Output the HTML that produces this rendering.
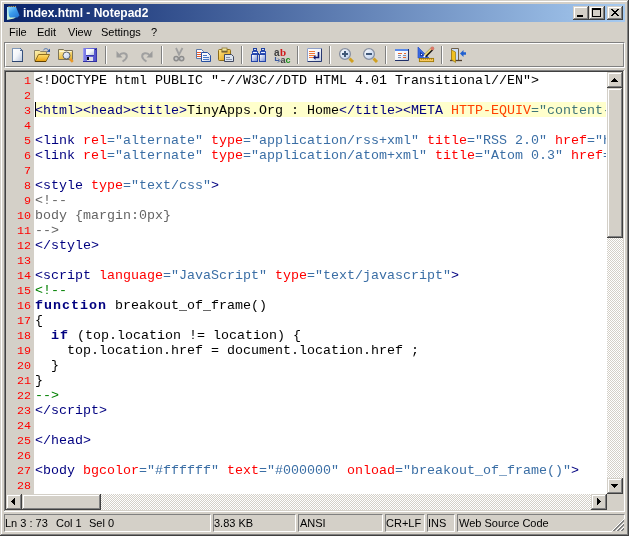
<!DOCTYPE html>
<html><head><meta charset="utf-8">
<style>
*{margin:0;padding:0;box-sizing:border-box}
html,body{width:629px;height:536px;overflow:hidden;background:#D4D0C8;position:relative}
body{font-family:"Liberation Sans",sans-serif;font-size:11px;color:#000}
.a{position:absolute}
.raised{border-style:solid;border-width:1px;border-color:#FFF #404040 #404040 #FFF}
.btn{position:absolute;width:16px;height:14px;background:#D4D0C8;box-shadow:inset -1px -1px 0 #404040,inset 1px 1px 0 #D4D0C8,inset -2px -2px 0 #808080,inset 2px 2px 0 #FFF}
.sbtn{position:absolute;width:16px;height:16px;background:#D4D0C8;box-shadow:inset -1px -1px 0 #404040,inset 1px 1px 0 #D4D0C8,inset -2px -2px 0 #808080,inset 2px 2px 0 #FFF}
.dither{background-color:#FFF;background-image:linear-gradient(45deg,#D4D0C8 25%,transparent 25%,transparent 75%,#D4D0C8 75%),linear-gradient(45deg,#D4D0C8 25%,transparent 25%,transparent 75%,#D4D0C8 75%);background-size:2px 2px;background-position:0 0,1px 1px}
.pane{position:absolute;top:514px;height:18px;border-style:solid;border-width:1px;border-color:#808080 #FFF #FFF #808080;white-space:nowrap;line-height:16px}
.st{position:absolute;top:515px;line-height:16px;white-space:nowrap}
.ed{font-family:"Liberation Mono",monospace;font-size:13.333px;white-space:pre;line-height:15px}
.ln{position:absolute;left:6px;width:25px;text-align:right;font-family:"Liberation Mono",monospace;font-size:11.667px;color:#F00;line-height:15px}
.o{color:#FF4000}.t{color:#000080}.at{color:#F00}.v{color:#3A6EA5}.v3{color:#3E7478}.c{color:#646464}.g{color:#008000}.k{color:#000080;font-weight:bold;letter-spacing:1px}
</style></head><body><div style="position:absolute;left:0;top:0;width:629px;height:536px;will-change:transform">
<!-- window frame -->
<div class="a" style="left:0;top:0;width:629px;height:536px;box-shadow:inset -1px -1px 0 #404040,inset 1px 1px 0 #D4D0C8,inset -2px -2px 0 #808080,inset 2px 2px 0 #FFF"></div>
<!-- title bar -->
<div class="a" style="left:4px;top:4px;width:621px;height:18px;background:linear-gradient(to right,#0A246A,#A6CAF0)"></div>
<svg class="a" style="left:0;top:0" width="24" height="24" viewBox="0 0 24 24">
<defs>
<linearGradient id="tiB" x1="0" y1="0" x2="1" y2="1"><stop offset="0" stop-color="#A8E8F8"/><stop offset="1" stop-color="#E8F8B8"/></linearGradient>
<linearGradient id="tiF" x1="0" y1="0" x2="0.8" y2="1"><stop offset="0" stop-color="#90D8FF"/><stop offset="0.5" stop-color="#3C9CEC"/><stop offset="1" stop-color="#2878D8"/></linearGradient>
</defs>
<path d="M7 7H15L16 17L14 18.5L7 20Z" fill="url(#tiB)"/>
<path d="M8 7H16L19.5 15.5L17.5 17.5H10L9 16Z" fill="url(#tiF)"/>
<path d="M8.5 6.5H16" stroke="#C0A050" stroke-width="1.2" stroke-dasharray="1.2 0.9"/>
</svg>
<div class="a" style="left:23px;top:4px;height:18px;line-height:18px;color:#FFF;font-weight:bold;font-size:12px;white-space:nowrap">index.html - Notepad2</div>
<div class="btn" style="left:573px;top:6px"><div class="a" style="left:4px;top:9px;width:6px;height:2px;background:#000"></div></div>
<div class="btn" style="left:589px;top:6px"><div class="a" style="left:3px;top:2px;width:9px;height:9px;border:1px solid #000;border-top-width:2px"></div></div>
<div class="btn" style="left:607px;top:6px"><svg class="a" style="left:0;top:0" width="16" height="14" shape-rendering="crispEdges"><path d="M4 3h1v1h-1zM5 3h1v1h-1zM10 3h1v1h-1zM11 3h1v1h-1zM5 4h1v1h-1zM6 4h1v1h-1zM9 4h1v1h-1zM10 4h1v1h-1zM6 5h1v1h-1zM7 5h1v1h-1zM8 5h1v1h-1zM9 5h1v1h-1zM7 6h1v1h-1zM8 6h1v1h-1zM6 7h1v1h-1zM7 7h1v1h-1zM8 7h1v1h-1zM9 7h1v1h-1zM5 8h1v1h-1zM6 8h1v1h-1zM9 8h1v1h-1zM10 8h1v1h-1zM4 9h1v1h-1zM5 9h1v1h-1zM10 9h1v1h-1zM11 9h1v1h-1z" fill="#000"/></svg></div>
<!-- menu -->
<div class="a" style="left:9px;top:23px;height:19px;line-height:19px">File</div>
<div class="a" style="left:37px;top:23px;height:19px;line-height:19px">Edit</div>
<div class="a" style="left:68px;top:23px;height:19px;line-height:19px">View</div>
<div class="a" style="left:101px;top:23px;height:19px;line-height:19px">Settings</div>
<div class="a" style="left:151px;top:23px;height:19px;line-height:19px">?</div>
<!-- toolbar etched -->
<div class="a" style="left:4px;top:42px;width:621px;height:26px;border-style:solid;border-width:1px;border-color:#808080 #FFF #FFF #808080"></div>
<div class="a" style="left:5px;top:43px;width:619px;height:24px;border-style:solid;border-width:1px;border-color:#FFF #808080 #808080 #FFF"></div>
<!-- ICONS -->
<svg class="a" style="left:0;top:0" width="629" height="70" viewBox="0 0 629 70">
<defs>
<linearGradient id="gPage" x1="0" y1="0" x2="1" y2="1"><stop offset="0" stop-color="#FFFFFF"/><stop offset="0.5" stop-color="#F4F6FA"/><stop offset="1" stop-color="#B8C6DE"/></linearGradient>
<linearGradient id="gFoldB" x1="0" y1="0" x2="1" y2="1"><stop offset="0" stop-color="#FFF4B0"/><stop offset="1" stop-color="#E0B850"/></linearGradient>
<linearGradient id="gFoldF" x1="0" y1="0" x2="0" y2="1"><stop offset="0" stop-color="#FFE070"/><stop offset="1" stop-color="#E8A010"/></linearGradient>
<linearGradient id="gSave" x1="0" y1="0" x2="1" y2="0"><stop offset="0" stop-color="#8484EC"/><stop offset="1" stop-color="#5050C8"/></linearGradient>
<linearGradient id="gLens" x1="0" y1="0" x2="1" y2="1"><stop offset="0" stop-color="#FFFFFF"/><stop offset="1" stop-color="#B8CCEC"/></linearGradient>
<linearGradient id="gBin" x1="0" y1="0" x2="1" y2="0"><stop offset="0" stop-color="#2848A8"/><stop offset="0.5" stop-color="#D8E4FF"/><stop offset="1" stop-color="#3050B0"/></linearGradient>
<linearGradient id="gClip" x1="0" y1="0" x2="1" y2="1"><stop offset="0" stop-color="#FFE890"/><stop offset="1" stop-color="#E09800"/></linearGradient>
<linearGradient id="gGray" x1="0" y1="0" x2="1" y2="1"><stop offset="0" stop-color="#C0C0C0"/><stop offset="1" stop-color="#808080"/></linearGradient>
</defs>
<!-- New -->
<g shape-rendering="crispEdges">
<path d="M12 48H20V49H21V50H22V62H12Z" fill="url(#gPage)"/>
<rect x="12" y="48" width="1" height="14" fill="#7890B0"/>
<rect x="12" y="48" width="8" height="1" fill="#8098B8"/>
<rect x="22" y="51" width="1" height="11" fill="#34507C"/>
<rect x="12" y="61" width="11" height="1" fill="#2C4470"/>
<path d="M20 48H21V49H22V50H23V51H20Z" fill="#506890"/>
<rect x="20" y="49" width="1" height="1" fill="#C8D4E8"/>
</g>
<!-- Open -->
<path d="M34.5 50.5H39.5L40.5 51.5H46.5V60.5H34.5Z" fill="url(#gFoldB)" stroke="#8C8468"/>
<path d="M35 61.5L38.5 54.5H49.5L46 61.5Z" fill="url(#gFoldF)" stroke="#8C6C20" stroke-width="1"/>
<path d="M35 61.5H46" stroke="#604000" stroke-width="1"/>
<path d="M43.3 50.3C44.5 48.2 47 48 48.3 50" fill="none" stroke="#4870B0" stroke-width="1"/>
<path d="M46.5 51.8L50 48.8V52Z" fill="#2C54A0"/>
<!-- Find files -->
<defs><linearGradient id="gFF" x1="0" y1="0" x2="0.3" y2="1"><stop offset="0" stop-color="#FFF4B8"/><stop offset="1" stop-color="#E8B838"/></linearGradient></defs>
<path d="M58.5 49.5H63.5L64.5 50.5H72.5V59.5H58.5Z" fill="url(#gFF)" stroke="#7C7458"/>
<path d="M59.5 51.5H71.5" stroke="#FFF8D8"/>
<path d="M70 59L72.8 61.8" stroke="#E89828" stroke-width="2.6"/>
<circle cx="66.5" cy="55.5" r="3.5" fill="url(#gLens)" stroke="#4C5460" stroke-width="0.9"/>
<!-- Save -->
<g shape-rendering="crispEdges">
<rect x="83" y="48" width="14" height="14" fill="url(#gSave)"/>
<rect x="83" y="48" width="1" height="14" fill="#9898F0"/>
<rect x="96" y="48" width="1" height="14" fill="#3838A8"/>
<rect x="83" y="61" width="14" height="1" fill="#3030A0"/>
<rect x="86" y="49" width="8" height="6" fill="url(#gPage)"/>
<rect x="86" y="55" width="8" height="1" fill="#3838B0"/>
<rect x="87" y="57" width="6" height="4" fill="#E0E0E8"/>
<rect x="87" y="57" width="2" height="3" fill="#000018"/>
<rect x="95" y="49" width="1" height="1" fill="#202070"/>
</g>
<!-- sep -->
<rect x="105" y="46" width="1" height="18" fill="#808080"/><rect x="106" y="46" width="1" height="18" fill="#FFFFFF"/>
<!-- Undo (disabled) -->
<path d="M116.5 51V57.5H122.5Z" fill="#9C9C9C"/>
<path d="M119.5 55C122 52.5 127 52.5 126.8 56.5C126.6 59 124 60.5 122.5 61.5" fill="none" stroke="#A0A0A0" stroke-width="2"/>
<!-- Redo (disabled) -->
<path d="M152.5 51V57.5H146.5Z" fill="#9C9C9C"/>
<path d="M149.5 55C147 52.5 142 52.5 142.2 56.5C142.4 59 145 60.5 146.5 61.5" fill="none" stroke="#A0A0A0" stroke-width="2"/>
<!-- sep -->
<rect x="161" y="46" width="1" height="18" fill="#808080"/><rect x="162" y="46" width="1" height="18" fill="#FFFFFF"/>
<!-- Cut (disabled) -->
<path d="M176 48L179.5 55.5M182.5 48L178.5 55.5" stroke="#A0A0A0" stroke-width="1.8"/>
<circle cx="176.2" cy="58.6" r="2.2" fill="#C8C8C8" stroke="#8C8C8C" stroke-width="1.5"/>
<circle cx="181.6" cy="58.6" r="2.2" fill="#C8C8C8" stroke="#8C8C8C" stroke-width="1.5"/>
<!-- Copy -->
<path d="M196.5 49.5H201.5L203.5 51.5V58.5H196.5Z" fill="#FAFCFF" stroke="#5A78A8"/>
<path d="M197 52.5H201M197 54.5H201M197 56.5H201" stroke="#E85828"/>
<path d="M201.5 52.5H207.5L210.5 55.5V61.5H201.5Z" fill="url(#gPage)" stroke="#2850A0"/>
<path d="M203 55.5H207M203 57.5H209M203 59.5H209" stroke="#4878C8"/>
<!-- Paste -->
<rect x="218.5" y="49.5" width="12" height="11" rx="1" fill="url(#gClip)" stroke="#8C6C18"/>
<path d="M221.5 51.5H227.5" stroke="#6C5830" stroke-width="2"/>
<rect x="222" y="48" width="5" height="3" fill="#F0E8A0" stroke="#907838" stroke-width="0.8"/>
<path d="M224.5 54.5H231.5L233.5 56.5V61.5H224.5Z" fill="#DCE4F0" stroke="#404860"/>
<path d="M226 57.5H230M226 59.5H232" stroke="#8890A8"/>
<!-- sep -->
<rect x="241" y="46" width="1" height="18" fill="#808080"/><rect x="242" y="46" width="1" height="18" fill="#FFFFFF"/>
<!-- Binoculars -->
<defs><linearGradient id="gBin2" x1="0" y1="0" x2="1" y2="1"><stop offset="0" stop-color="#FFFFFF"/><stop offset="1" stop-color="#7890D8"/></linearGradient></defs>
<g shape-rendering="crispEdges"><rect x="253" y="48" width="4" height="3" fill="#2040A0"/><rect x="254" y="49" width="2" height="1" fill="#C8D8F8"/>
<rect x="252" y="51" width="6" height="3" fill="#2C4CB4"/><rect x="253" y="52" width="4" height="1" fill="#E8F0FF"/>
<rect x="251" y="54" width="7" height="8" fill="#2444A8"/><rect x="252" y="55" width="5" height="6" fill="url(#gBin2)"/>
<rect x="261" y="48" width="4" height="3" fill="#2040A0"/><rect x="262" y="49" width="2" height="1" fill="#C8D8F8"/>
<rect x="260" y="51" width="6" height="3" fill="#2C4CB4"/><rect x="261" y="52" width="4" height="1" fill="#E8F0FF"/>
<rect x="259" y="54" width="7" height="8" fill="#2444A8"/><rect x="260" y="55" width="5" height="6" fill="url(#gBin2)"/>
<rect x="258" y="53" width="1" height="2" fill="#203890"/></g>
<!-- Replace -->
<text x="274" y="56" font-family="Liberation Sans" font-weight="bold" font-size="10" fill="#404040">a</text>
<text x="280" y="56" font-family="Liberation Serif" font-weight="bold" font-size="11" fill="#D01818">b</text>
<path d="M275.5 57V60.5H279" fill="none" stroke="#3858A0" stroke-width="1.2"/>
<path d="M278 58.5L280 60.5L278 62.5" fill="none" stroke="#3858A0" stroke-width="1"/>
<text x="280.5" y="63" font-family="Liberation Sans" font-weight="bold" font-size="9" fill="#404040">a</text>
<text x="285.5" y="63" font-family="Liberation Sans" font-weight="bold" font-size="9" fill="#189018">c</text>
<!-- sep -->
<rect x="297" y="46" width="1" height="18" fill="#808080"/><rect x="298" y="46" width="1" height="18" fill="#FFFFFF"/>
<!-- Word wrap -->
<rect x="307" y="48" width="15" height="14" fill="url(#gPage)"/>
<path d="M307.5 61.5V48.5H321.5" fill="none" stroke="#90A0C8"/>
<path d="M321.5 48.5V61.5H307.5" fill="none" stroke="#283870"/>
<path d="M309 51.5H315M309 53.5H315M309 55.5H315M309 57.5H313" stroke="#F07838"/>
<path d="M318.5 52V57.5H314.5" fill="none" stroke="#101870" stroke-width="1.6"/>
<path d="M315.5 55L313 57.5L315.5 60Z" fill="#101870"/>
<!-- sep -->
<rect x="329" y="46" width="1" height="18" fill="#808080"/><rect x="330" y="46" width="1" height="18" fill="#FFFFFF"/>
<!-- Zoom in -->
<path d="M349.5 58.5L353 62" stroke="#D0A020" stroke-width="3"/>
<circle cx="345" cy="54" r="5.4" fill="url(#gLens)" stroke="#8890A0" stroke-width="1.3"/>
<path d="M342 54H348M345 51V57" stroke="#405878" stroke-width="2"/>
<!-- Zoom out -->
<path d="M373.5 58.5L377 62" stroke="#D0A020" stroke-width="3"/>
<circle cx="369" cy="54" r="5.4" fill="url(#gLens)" stroke="#8890A0" stroke-width="1.3"/>
<path d="M366 54H372" stroke="#405878" stroke-width="2"/>
<!-- sep -->
<rect x="385" y="46" width="1" height="18" fill="#808080"/><rect x="386" y="46" width="1" height="18" fill="#FFFFFF"/>
<!-- Scheme -->
<rect x="395" y="49" width="14" height="12" fill="url(#gPage)"/>
<rect x="395" y="49" width="14" height="2" fill="#5888E8"/>
<path d="M408.5 49V60.5H395" fill="none" stroke="#203068"/>
<path d="M398 53.5H402M404 53.5H406" stroke="#E86830"/>
<path d="M398 55.5H401M403 55.5H406M398 57.5H401" stroke="#8090B0"/>
<path d="M403 57.5H406" stroke="#E86830"/>
<!-- Customize -->
<path d="M418 47V58H429Z" fill="#3A6AE0"/>
<path d="M418 47V58H429Z" fill="none" stroke="#2850C8" stroke-width="0.7"/>
<path d="M420 51.5V56.3H424.8Z" fill="#1C3CA8"/>
<rect x="421" y="54" width="1" height="1" fill="#FFFFFF"/>
<rect x="419.4" y="58.4" width="14.2" height="3.2" fill="#F8C860" stroke="#A07800" stroke-width="0.9"/>
<path d="M421.5 58.5V59.5M423.5 58.5V59.5M425.5 58.5V59.5M427.5 58.5V59.5M429.5 58.5V59.5M431.5 58.5V59.5" stroke="#906800" stroke-width="0.9"/>
<path d="M425 56L432 49" stroke="#181818" stroke-width="3.4"/>
<path d="M424.6 55.4L431.4 48.6" stroke="#F0DC80" stroke-width="2"/>
<circle cx="432.4" cy="48.4" r="1.9" fill="#D87868"/>
<path d="M423.8 57L425 55.6" stroke="#FFFFFF" stroke-width="1.6"/>
<!-- sep -->
<rect x="441" y="46" width="1" height="18" fill="#808080"/><rect x="442" y="46" width="1" height="18" fill="#FFFFFF"/>
<!-- Exit -->
<path d="M451.5 60V48.5H458.5V60" fill="#C8DCF8" stroke="#706048"/>
<path d="M450 60.5H462" stroke="#504030" stroke-width="1.3"/>
<path d="M451.5 50L455.5 52V62.5L451.5 59.5Z" fill="#F0C020" stroke="#A08020" stroke-width="0.8"/>
<path d="M460 53.5L463.5 50V52.3H466V54.7H463.5V57Z" fill="#2060D0"/>
</svg>
<!-- /ICONS -->
<!-- editor frame -->
<div class="a" style="left:4px;top:70px;width:621px;height:442px;box-shadow:inset -1px -1px 0 #FFF,inset 1px 1px 0 #808080,inset -2px -2px 0 #D4D0C8,inset 2px 2px 0 #404040"></div>
<div class="a" style="left:6px;top:72px;width:28px;height:422px;background:#D4D0C8"></div>
<div class="a" style="left:34px;top:72px;width:572px;height:422px;background:#FFF;overflow:hidden">
<div class="a" style="left:2px;top:30px;width:570px;height:15px;background:#FFFFCC"></div>
<div class="a" style="left:1px;top:1px;width:600px;height:422px">
<div class="ed a" style="top:0px">&lt;!DOCTYPE html PUBLIC "-//W3C//DTD HTML 4.01 Transitional//EN"&gt;</div>
<div class="ed a" style="top:15px"></div>
<div class="ed a cur" style="top:30px"><span class="t">&lt;html&gt;&lt;head&gt;&lt;title&gt;</span>TinyApps.Org : Home<span class="t">&lt;/title&gt;&lt;META </span><span class="o">HTTP-EQUIV</span><span class="v3">="content-type" CONTENT="text/html"&gt;</span></div>
<div class="ed a" style="top:45px"></div>
<div class="ed a" style="top:60px"><span class="t">&lt;link </span><span class="at">rel</span><span class="v">="alternate" </span><span class="at">type</span><span class="v">="application/rss+xml" </span><span class="at">title</span><span class="v">="RSS 2.0" </span><span class="at">href</span><span class="v">="h</span></div>
<div class="ed a" style="top:75px"><span class="t">&lt;link </span><span class="at">rel</span><span class="v">="alternate" </span><span class="at">type</span><span class="v">="application/atom+xml" </span><span class="at">title</span><span class="v">="Atom 0.3" </span><span class="at">href</span><span class="v">="h</span></div>
<div class="ed a" style="top:90px"></div>
<div class="ed a" style="top:105px"><span class="t">&lt;style </span><span class="at">type</span><span class="v">="text/css"</span><span class="t">&gt;</span></div>
<div class="ed a" style="top:120px"><span class="c">&lt;!--</span></div>
<div class="ed a" style="top:135px"><span class="c">body {margin:0px}</span></div>
<div class="ed a" style="top:150px"><span class="c">--&gt;</span></div>
<div class="ed a" style="top:165px"><span class="t">&lt;/style&gt;</span></div>
<div class="ed a" style="top:180px"></div>
<div class="ed a" style="top:195px"><span class="t">&lt;script </span><span class="at">language</span><span class="v">="JavaScript" </span><span class="at">type</span><span class="v">="text/javascript"</span><span class="t">&gt;</span></div>
<div class="ed a" style="top:210px"><span class="g">&lt;!--</span></div>
<div class="ed a" style="top:225px"><span class="k">function</span> breakout_of_frame()</div>
<div class="ed a" style="top:240px">{</div>
<div class="ed a" style="top:255px">  <span class="k">if</span> (top.location != location) {</div>
<div class="ed a" style="top:270px">    top.location.href = document.location.href ;</div>
<div class="ed a" style="top:285px">  }</div>
<div class="ed a" style="top:300px">}</div>
<div class="ed a" style="top:315px"><span class="g">--&gt;</span></div>
<div class="ed a" style="top:330px"><span class="t">&lt;/script&gt;</span></div>
<div class="ed a" style="top:345px"></div>
<div class="ed a" style="top:360px"><span class="t">&lt;/head&gt;</span></div>
<div class="ed a" style="top:375px"></div>
<div class="ed a" style="top:390px"><span class="t">&lt;body </span><span class="at">bgcolor</span><span class="v">="#ffffff" </span><span class="at">text</span><span class="v">="#000000" </span><span class="at">onload</span><span class="v">="breakout_of_frame()"</span><span class="t">&gt;</span></div>
<div class="ed a" style="top:405px"></div>
</div>
<div class="a" style="left:1px;top:30px;width:1px;height:15px;background:#000"></div>
</div>
<div class="ln" style="top:74px">1</div>
<div class="ln" style="top:89px">2</div>
<div class="ln" style="top:104px">3</div>
<div class="ln" style="top:119px">4</div>
<div class="ln" style="top:134px">5</div>
<div class="ln" style="top:149px">6</div>
<div class="ln" style="top:164px">7</div>
<div class="ln" style="top:179px">8</div>
<div class="ln" style="top:194px">9</div>
<div class="ln" style="top:209px">10</div>
<div class="ln" style="top:224px">11</div>
<div class="ln" style="top:239px">12</div>
<div class="ln" style="top:254px">13</div>
<div class="ln" style="top:269px">14</div>
<div class="ln" style="top:284px">15</div>
<div class="ln" style="top:299px">16</div>
<div class="ln" style="top:314px">17</div>
<div class="ln" style="top:329px">18</div>
<div class="ln" style="top:344px">19</div>
<div class="ln" style="top:359px">20</div>
<div class="ln" style="top:374px">21</div>
<div class="ln" style="top:389px">22</div>
<div class="ln" style="top:404px">23</div>
<div class="ln" style="top:419px">24</div>
<div class="ln" style="top:434px">25</div>
<div class="ln" style="top:449px">26</div>
<div class="ln" style="top:464px">27</div>
<div class="ln" style="top:479px">28</div>
<div class="a" style="left:606px;top:72px;width:1px;height:422px;background:#FFF"></div>
<!-- vertical scrollbar -->
<div class="a dither" style="left:607px;top:72px;width:16px;height:422px"></div>
<div class="sbtn" style="left:607px;top:72px"></div>
<div class="sbtn" style="left:607px;top:88px;height:150px"></div>
<div class="sbtn" style="left:607px;top:478px"></div>
<!-- horizontal scrollbar -->
<div class="a dither" style="left:6px;top:494px;width:601px;height:16px"></div>
<div class="sbtn" style="left:6px;top:494px"></div>
<div class="sbtn" style="left:22px;top:494px;width:79px"></div>
<div class="sbtn" style="left:591px;top:494px"></div>
<div class="a" style="left:607px;top:494px;width:16px;height:16px;background:#D4D0C8"></div>
<svg class="a" style="left:0;top:0" width="629" height="536" shape-rendering="crispEdges"><path d="M614 78h1v1h-1zM613 79h3v1h-3zM612 80h5v1h-5zM611 81h7v1h-7zM611 484h7v1h-7zM612 485h5v1h-5zM613 486h3v1h-3zM614 487h1v1h-1zM11 501h1v1h-1zM12 500h1v3h-1zM13 499h1v5h-1zM14 498h1v7h-1zM597 498h1v7h-1zM598 499h1v5h-1zM599 500h1v3h-1zM600 501h1v1h-1z" fill="#000"/></svg>
<!-- status bar -->
<div class="pane" style="left:4px;width:207px"></div>
<div class="pane" style="left:213px;width:83px"></div>
<div class="pane" style="left:298px;width:85px"></div>
<div class="pane" style="left:385px;width:40px"></div>
<div class="pane" style="left:427px;width:28px"></div>
<div class="pane" style="left:457px;width:168px"></div>
<div class="st" style="left:5px">Ln 3 : 73</div>
<div class="st" style="left:56px">Col 1</div>
<div class="st" style="left:89px">Sel 0</div>
<div class="st" style="left:214px">3.83 KB</div>
<div class="st" style="left:300px">ANSI</div>
<div class="st" style="left:386px">CR+LF</div>
<div class="st" style="left:428px">INS</div>
<div class="st" style="left:459px">Web Source Code</div>
<svg class="a" style="left:0;top:0" width="629" height="536" shape-rendering="crispEdges"><path d="M611 531h1v1h-1zM612 530h1v1h-1zM613 529h1v1h-1zM614 528h1v1h-1zM615 527h1v1h-1zM616 526h1v1h-1zM616 530h1v1h-1zM617 525h1v1h-1zM617 529h1v1h-1zM618 524h1v1h-1zM618 528h1v1h-1zM619 523h1v1h-1zM619 527h1v1h-1zM620 522h1v1h-1zM620 526h1v1h-1zM620 530h1v1h-1zM621 521h1v1h-1zM621 525h1v1h-1zM621 529h1v1h-1zM622 520h1v1h-1zM622 524h1v1h-1zM622 528h1v1h-1zM623 519h1v1h-1zM623 523h1v1h-1zM623 527h1v1h-1zM624 518h1v1h-1z" fill="#FFF"/><path d="M613 530h1v1h-1zM614 529h1v1h-1zM614 530h1v1h-1zM615 528h1v1h-1zM615 529h1v1h-1zM616 527h1v1h-1zM616 528h1v1h-1zM617 526h1v1h-1zM617 527h1v1h-1zM617 530h1v1h-1zM618 525h1v1h-1zM618 526h1v1h-1zM618 529h1v1h-1zM618 530h1v1h-1zM619 524h1v1h-1zM619 525h1v1h-1zM619 528h1v1h-1zM619 529h1v1h-1zM620 523h1v1h-1zM620 524h1v1h-1zM620 527h1v1h-1zM620 528h1v1h-1zM621 522h1v1h-1zM621 523h1v1h-1zM621 526h1v1h-1zM621 527h1v1h-1zM621 530h1v1h-1zM622 521h1v1h-1zM622 522h1v1h-1zM622 525h1v1h-1zM622 526h1v1h-1zM622 529h1v1h-1zM622 530h1v1h-1zM623 520h1v1h-1zM623 521h1v1h-1zM623 524h1v1h-1zM623 525h1v1h-1zM623 528h1v1h-1zM623 529h1v1h-1z" fill="#808080"/><path d="M612 531h1v1h-1zM613 531h1v1h-1zM614 531h1v1h-1zM615 530h1v1h-1zM615 531h1v1h-1zM616 529h1v1h-1zM616 531h1v1h-1zM617 528h1v1h-1zM617 531h1v1h-1zM618 527h1v1h-1zM618 531h1v1h-1zM619 526h1v1h-1zM619 530h1v1h-1zM619 531h1v1h-1zM620 525h1v1h-1zM620 529h1v1h-1zM620 531h1v1h-1zM621 524h1v1h-1zM621 528h1v1h-1zM621 531h1v1h-1zM622 523h1v1h-1zM622 527h1v1h-1zM622 531h1v1h-1zM623 522h1v1h-1zM623 526h1v1h-1zM623 530h1v1h-1zM623 531h1v1h-1zM624 519h1v1h-1zM624 520h1v1h-1zM624 521h1v1h-1zM624 522h1v1h-1zM624 523h1v1h-1zM624 524h1v1h-1zM624 525h1v1h-1zM624 526h1v1h-1zM624 527h1v1h-1zM624 528h1v1h-1zM624 529h1v1h-1zM624 530h1v1h-1zM624 531h1v1h-1z" fill="#D4D0C8"/></svg>
</div></body></html>
